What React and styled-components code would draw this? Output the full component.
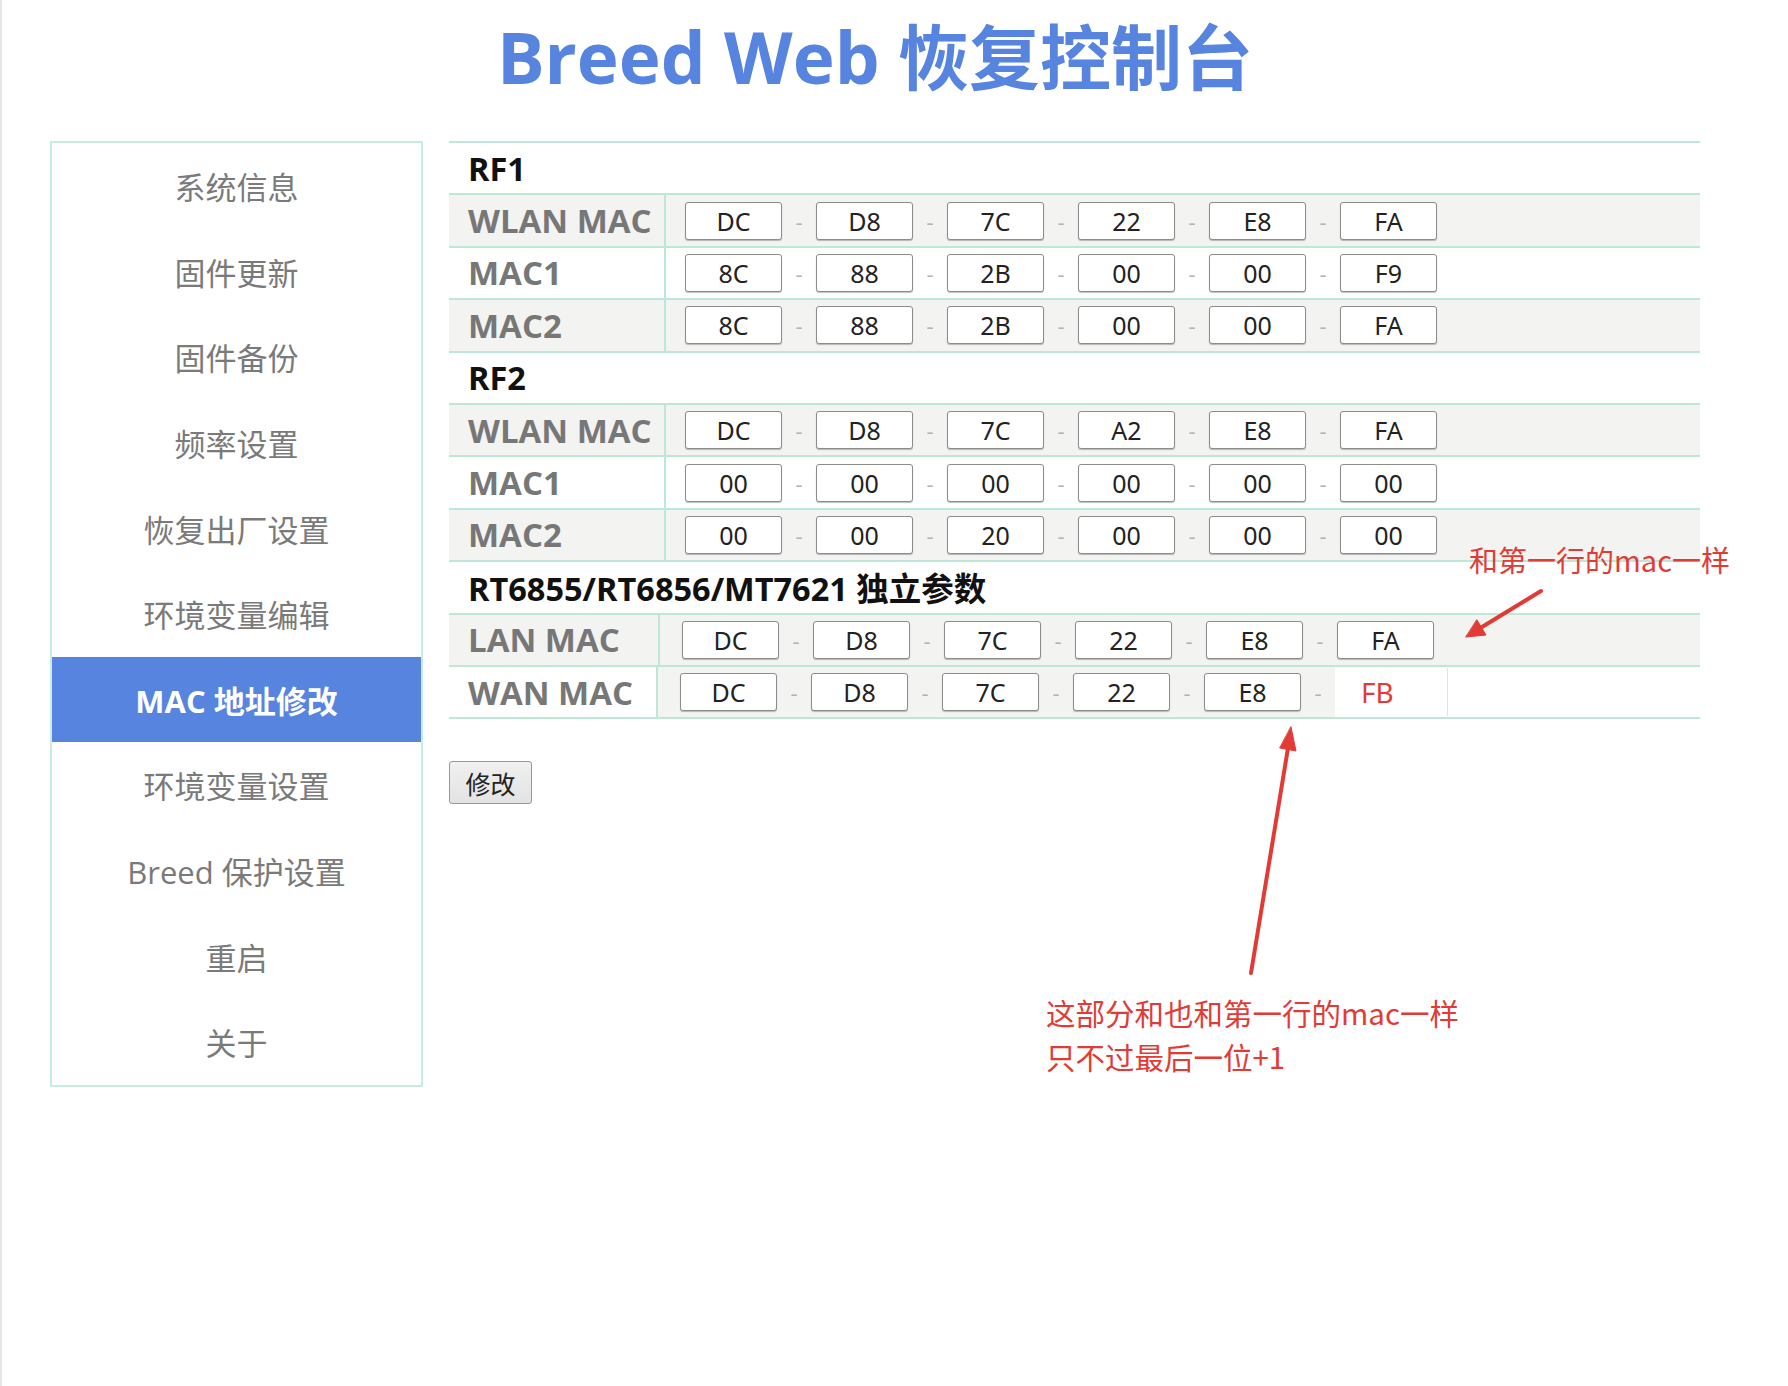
import React from 'react'
import styled, { createGlobalStyle } from 'styled-components'

const GlobalStyle = createGlobalStyle`
  html, body {
    margin: 0;
    padding: 0;
    background: #fff;
  }
  body {
    font-family: "Open Sans", "Noto Sans CJK SC", sans-serif;
  }
`

const mint = '#bde7d7'
const zebra = '#f3f3f1'
const red = '#e23b36'

const Page = styled.div`
  position: relative;
  min-height: 1386px;
  border-left: 2px solid #e7e7e7;
  box-sizing: border-box;
`

const Container = styled.div`
  margin-left: 48px;
  width: 1650px;
`

const Title = styled.h1`
  margin: 0;
  padding-top: 9px;
  height: 141px;
  box-sizing: border-box;
  text-align: center;
  font-size: 71px;
  line-height: 96px;
  font-weight: 700;
  color: #5684df;
  font-family: "Open Sans", "Noto Sans CJK SC", sans-serif;
`

const Main = styled.div`
  display: flex;
  align-items: flex-start;
  gap: 26px;
`

const Sidebar = styled.ul`
  list-style: none;
  margin: 0;
  padding: 0;
  width: 373px;
  box-sizing: border-box;
  border: 2px solid #c6eedf;
`

const NavItem = styled.li`
  height: 85.6px;
  display: flex;
  align-items: center;
  justify-content: center;
  font-size: 31px;
  font-weight: ${p => (p.active ? 700 : 400)};
  color: ${p => (p.active ? '#fff' : '#7a7a7a')};
  background: ${p => (p.active ? '#5684df' : 'transparent')};
`

const Content = styled.div`
  flex: 1;
`

const Table = styled.div`
  border-top: 2px solid ${mint};
`

const Row = styled.div`
  display: flex;
  align-items: stretch;
  height: 52.4px;
  box-sizing: border-box;
  border-bottom: 2px solid ${mint};
  background: ${p => (p.shade ? zebra : '#fff')};
`

const Heading = styled(Row)`
  align-items: center;
  padding-left: 19px;
  font-size: 32.5px;
  font-weight: 700;
  color: #111;
`

const Label = styled.div`
  width: ${p => p.width}px;
  flex: none;
  box-sizing: border-box;
  display: flex;
  align-items: center;
  padding-left: 19px;
  border-right: 2px solid ${mint};
  font-size: 33px;
  font-weight: 700;
  color: #777;
  background: ${p => (p.plain ? '#fff' : 'transparent')};
`

const Values = styled.div`
  display: flex;
  align-items: center;
  padding-left: ${p => p.indent || 22}px;
  background: ${p => (p.shade ? zebra : 'transparent')};
`

const Octet = styled.input`
  width: 97px;
  height: 38px;
  box-sizing: border-box;
  padding: 0;
  border: 1px solid #8c8c8c;
  border-radius: 3px;
  box-shadow: 0 1px 1px rgba(0, 0, 0, 0.25);
  background: #fff;
  text-align: center;
  font-family: "Noto Sans", "Open Sans", sans-serif;
  font-size: 25px;
  color: #222;
  outline: none;
`

const Sep = styled.span`
  width: 34px;
  text-align: center;
  font-size: 22px;
  color: #b4b4b4;
`

const EditedOctet = styled.div`
  width: 112px;
  align-self: stretch;
  margin: 1px 0;
  box-sizing: border-box;
  padding-left: 26px;
  display: flex;
  align-items: center;
  background: #fff;
  box-shadow: 1px 0 0 #e2e2e2;
  font-family: "Noto Sans", "Open Sans", sans-serif;
  font-size: 28px;
  color: ${red};
`

const Button = styled.button`
  margin-top: 42px;
  width: 83px;
  height: 43px;
  padding: 0;
  border: 1px solid #979797;
  border-radius: 3px;
  background: linear-gradient(#f0f0f0, #e3e3e3);
  font-family: "Noto Sans CJK SC", sans-serif;
  font-size: 25px;
  color: #222;
`

const Note = styled.div`
  position: absolute;
  left: ${p => p.x}px;
  top: ${p => p.y}px;
  font-family: "Noto Sans CJK SC", sans-serif;
  font-size: ${p => p.size}px;
  line-height: 44px;
  color: ${red};
  white-space: nowrap;
`

const Overlay = styled.svg`
  position: absolute;
  left: 0;
  top: 0;
  pointer-events: none;
`

const menu = [
  '系统信息', '固件更新', '固件备份', '频率设置', '恢复出厂设置', '环境变量编辑',
  'MAC 地址修改', '环境变量设置', 'Breed 保护设置', '重启', '关于'
]

const rf1 = [
  { name: 'WLAN MAC', mac: ['DC', 'D8', '7C', '22', 'E8', 'FA'] },
  { name: 'MAC1', mac: ['8C', '88', '2B', '00', '00', 'F9'] },
  { name: 'MAC2', mac: ['8C', '88', '2B', '00', '00', 'FA'] },
]

const rf2 = [
  { name: 'WLAN MAC', mac: ['DC', 'D8', '7C', 'A2', 'E8', 'FA'] },
  { name: 'MAC1', mac: ['00', '00', '00', '00', '00', '00'] },
  { name: 'MAC2', mac: ['00', '00', '20', '00', '00', '00'] },
]

const MacInputs = ({ mac }) => (
  <>
    {mac.map((v, i) => (
      <React.Fragment key={i}>
        {i > 0 && <Sep>-</Sep>}
        <Octet defaultValue={v} />
      </React.Fragment>
    ))}
  </>
)

const MacRows = ({ rows }) =>
  rows.map((r, i) => (
    <Row key={r.name} shade={i % 2 === 0}>
      <Label width={217}>{r.name}</Label>
      <Values indent={19}>
        <MacInputs mac={r.mac} />
      </Values>
    </Row>
  ))

const Arrows = () => (
  <Overlay width="1788" height="1386" viewBox="0 0 1788 1386">
    <g stroke={red} strokeWidth="4" strokeLinecap="round" fill={red}>
      <line x1="1539" y1="591" x2="1480" y2="627" />
      <polygon points="1464,637 1484,635 1475,620" strokeWidth="1" />
      <line x1="1249" y1="973" x2="1286" y2="748" />
      <polygon points="1289,727 1294,751 1278,748" strokeWidth="1" />
    </g>
  </Overlay>
)

export default function App() {
  return (
    <Page>
      <GlobalStyle />
      <Container>
        <Title>Breed Web 恢复控制台</Title>
        <Main>
          <Sidebar>
            {menu.map(m => (
              <NavItem key={m} active={m === 'MAC 地址修改'}>{m}</NavItem>
            ))}
          </Sidebar>
          <Content>
            <Table>
              <Heading>RF1</Heading>
              <MacRows rows={rf1} />
              <Heading>RF2</Heading>
              <MacRows rows={rf2} />
              <Heading>RT6855/RT6856/MT7621 独立参数</Heading>
              <Row shade>
                <Label width={211}>LAN MAC</Label>
                <Values>
                  <MacInputs mac={['DC', 'D8', '7C', '22', 'E8', 'FA']} />
                </Values>
              </Row>
              <Row>
                <Label width={209} plain>WAN MAC</Label>
                <Values shade>
                  <MacInputs mac={['DC', 'D8', '7C', '22', 'E8']} />
                  <Sep>-</Sep>
                </Values>
                <EditedOctet>FB</EditedOctet>
              </Row>
            </Table>
            <Button>修改</Button>
          </Content>
        </Main>
      </Container>
      <Note x={1467} y={537} size={29}>和第一行的mac一样</Note>
      <Note x={1044} y={990} size={29.5}>
        这部分和也和第一行的mac一样<br />只不过最后一位+1
      </Note>
      <Arrows />
    </Page>
  )
}
